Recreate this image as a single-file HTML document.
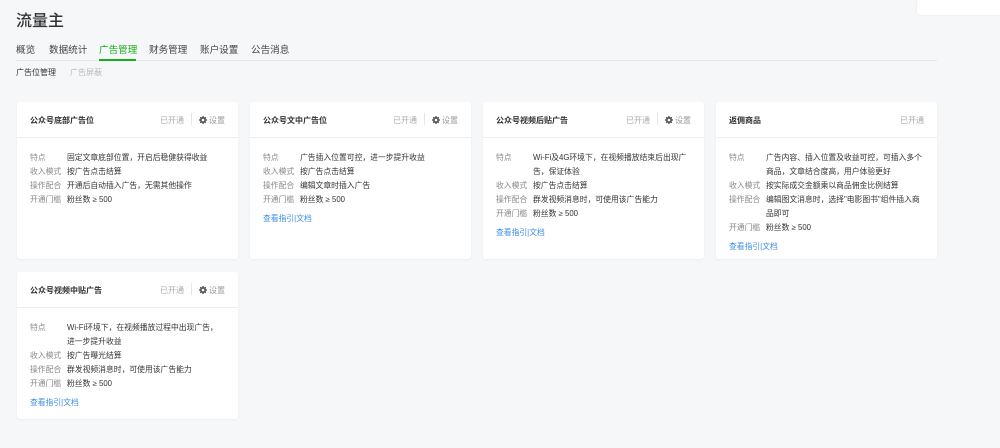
<!DOCTYPE html>
<html><head><meta charset="utf-8"><style>
*{margin:0;padding:0;box-sizing:border-box}
body{width:1000px;height:448px;background:#f6f7f9;font-family:"Liberation Sans","Noto Sans CJK SC",sans-serif;position:relative;overflow:hidden;color:#333}
.tr{position:absolute;left:917px;top:-4px;width:90px;height:19px;background:#fff;border-radius:3px;box-shadow:0 0 2px rgba(0,0,0,.08)}
h1{position:absolute;left:16px;top:7px;font-size:16px;font-weight:500;color:#333}
.tabs{position:absolute;left:16px;top:42px;font-size:9.6px;color:#444;white-space:nowrap}
.tabs span{position:absolute;top:0}
.tabs .act{color:#1aad19}
.ul{position:absolute;left:99px;top:59px;width:37px;height:2px;background:#1aad19}
.line{position:absolute;left:16px;top:60px;width:921px;height:1px;background:#e6e7ea}
.sub{position:absolute;top:67px;font-size:8px;color:#333}
.card{position:absolute;background:#fff;border-radius:3px;box-shadow:0 1px 2px rgba(0,0,0,.05);width:221px}
.hd{height:36px;border-bottom:1px solid #eeeff1;position:relative}
.hd b{position:absolute;left:13px;top:13px;font-size:8px;font-weight:bold;color:#333}
.st{position:absolute;right:54px;top:13px;font-size:8px;color:#aaa}
.sep{position:absolute;right:46px;top:11px;width:1px;height:12px;background:#e6e6e6}
.gear{position:absolute;right:31px;top:14px;width:8px;height:8px}
.set{position:absolute;right:13px;top:13px;font-size:8px;color:#999}
.bd{padding:13px 14px 0 13px;font-size:7.8px;line-height:14px}
.r{display:flex}
.r .l{width:37px;flex:none;color:#888}
.r .v{color:#333}
.lk{color:#3b8ee8;margin-top:5px;font-size:7.8px}
</style></head><body>
<div class="tr"></div>
<h1>流量主</h1>
<div class="tabs">
<span style="left:0">概览</span><span style="left:33px">数据统计</span><span class="act" style="left:83px">广告管理</span><span style="left:133px">财务管理</span><span style="left:184px">账户设置</span><span style="left:235px">公告消息</span>
</div>
<div class="line"></div><div class="ul"></div>
<div class="sub" style="left:16px">广告位管理</div>
<div class="sub" style="left:70px;color:#bbb">广告屏蔽</div>

<svg width="0" height="0" style="position:absolute"><defs><symbol id="g" viewBox="0 0 16 16"><path d="M6.8 0h2.4l.4 2.2 1.4.6 1.8-1.3 1.7 1.7-1.3 1.8.6 1.4 2.2.4v2.4l-2.2.4-.6 1.4 1.3 1.8-1.7 1.7-1.8-1.3-1.4.6-.4 2.2H6.8l-.4-2.2-1.4-.6-1.8 1.3-1.7-1.7 1.3-1.8-.6-1.4L0 9.2V6.8l2.2-.4.6-1.4-1.3-1.8 1.7-1.7L5 2.8l1.4-.6z" fill="#555"/><circle cx="8" cy="8" r="2.6" fill="#fff"/></symbol></defs></svg>

<div class="card" style="left:17px;top:102px;height:157px">
<div class="hd"><b>公众号底部广告位</b><span class="st">已开通</span><i class="sep"></i><svg class="gear"><use href="#g"/></svg><span class="set">设置</span></div>
<div class="bd">
<div class="r"><span class="l">特点</span><span class="v">固定文章底部位置，开启后稳健获得收益</span></div>
<div class="r"><span class="l">收入模式</span><span class="v">按广告点击结算</span></div>
<div class="r"><span class="l">操作配合</span><span class="v">开通后自动插入广告，无需其他操作</span></div>
<div class="r"><span class="l">开通门槛</span><span class="v">粉丝数 ≥ 500</span></div>
</div></div>

<div class="card" style="left:250px;top:102px;height:157px">
<div class="hd"><b>公众号文中广告位</b><span class="st">已开通</span><i class="sep"></i><svg class="gear"><use href="#g"/></svg><span class="set">设置</span></div>
<div class="bd">
<div class="r"><span class="l">特点</span><span class="v">广告插入位置可控，进一步提升收益</span></div>
<div class="r"><span class="l">收入模式</span><span class="v">按广告点击结算</span></div>
<div class="r"><span class="l">操作配合</span><span class="v">编辑文章时插入广告</span></div>
<div class="r"><span class="l">开通门槛</span><span class="v">粉丝数 ≥ 500</span></div>
<div class="lk">查看指引|文档</div>
</div></div>

<div class="card" style="left:483px;top:102px;height:157px">
<div class="hd"><b>公众号视频后贴广告</b><span class="st">已开通</span><i class="sep"></i><svg class="gear"><use href="#g"/></svg><span class="set">设置</span></div>
<div class="bd">
<div class="r"><span class="l">特点</span><span class="v">Wi-Fi及4G环境下，在视频播放结束后出现广告，保证体验</span></div>
<div class="r"><span class="l">收入模式</span><span class="v">按广告点击结算</span></div>
<div class="r"><span class="l">操作配合</span><span class="v">群发视频消息时，可使用该广告能力</span></div>
<div class="r"><span class="l">开通门槛</span><span class="v">粉丝数 ≥ 500</span></div>
<div class="lk">查看指引|文档</div>
</div></div>

<div class="card" style="left:716px;top:102px;height:157px">
<div class="hd"><b>返佣商品</b><span class="st" style="right:13px">已开通</span></div>
<div class="bd">
<div class="r"><span class="l">特点</span><span class="v">广告内容、插入位置及收益可控，可插入多个商品，文章结合度高，用户体验更好</span></div>
<div class="r"><span class="l">收入模式</span><span class="v">按实际成交金额乘以商品佣金比例结算</span></div>
<div class="r"><span class="l">操作配合</span><span class="v">编辑图文消息时，选择"电影图书"组件插入商品即可</span></div>
<div class="r"><span class="l">开通门槛</span><span class="v">粉丝数 ≥ 500</span></div>
<div class="lk">查看指引|文档</div>
</div></div>

<div class="card" style="left:17px;top:272px;height:147px">
<div class="hd"><b>公众号视频中贴广告</b><span class="st">已开通</span><i class="sep"></i><svg class="gear"><use href="#g"/></svg><span class="set">设置</span></div>
<div class="bd">
<div class="r"><span class="l">特点</span><span class="v">Wi-Fi环境下，在视频播放过程中出现广告，进一步提升收益</span></div>
<div class="r"><span class="l">收入模式</span><span class="v">按广告曝光结算</span></div>
<div class="r"><span class="l">操作配合</span><span class="v">群发视频消息时，可使用该广告能力</span></div>
<div class="r"><span class="l">开通门槛</span><span class="v">粉丝数 ≥ 500</span></div>
<div class="lk">查看指引|文档</div>
</div></div>
</body></html>
